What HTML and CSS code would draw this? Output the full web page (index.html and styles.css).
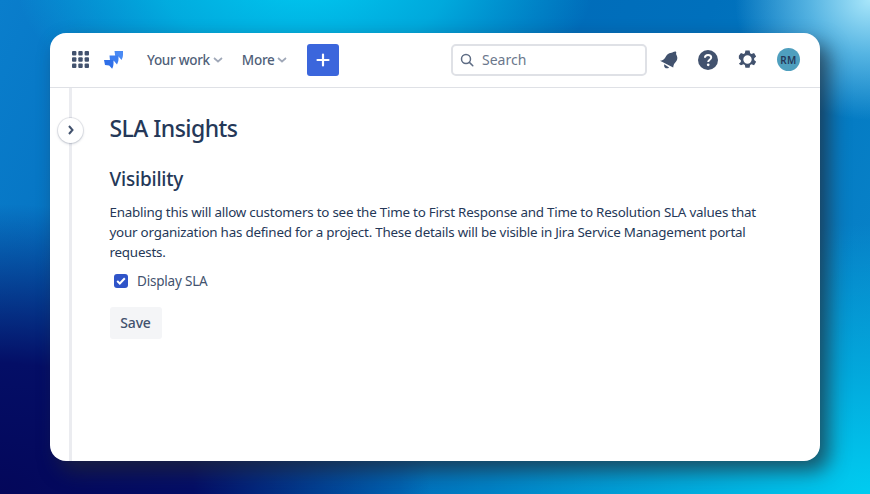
FILE: index.html
```html
<!DOCTYPE html>
<html lang="en">
<head>
<meta charset="utf-8">
<title>SLA Insights</title>
<link rel="stylesheet" href="styles.css">
</head>
<body>
<div class="window">
  <header class="topbar">
    <div class="nav-left">
      <svg class="apps" width="17" height="17" viewBox="0 0 17 17"><g fill="#42526e"><rect x="0" y="0" width="4.400" height="4.400" rx="1"/><rect x="6.300" y="0" width="4.400" height="4.400" rx="1"/><rect x="12.600" y="0" width="4.400" height="4.400" rx="1"/><rect x="0" y="6.300" width="4.400" height="4.400" rx="1"/><rect x="6.300" y="6.300" width="4.400" height="4.400" rx="1"/><rect x="12.600" y="6.300" width="4.400" height="4.400" rx="1"/><rect x="0" y="12.600" width="4.400" height="4.400" rx="1"/><rect x="6.300" y="12.600" width="4.400" height="4.400" rx="1"/><rect x="12.600" y="12.600" width="4.400" height="4.400" rx="1"/></g></svg>
      <svg class="logo" width="19" height="19" viewBox="0 0 19 19"><path fill="#4a8af4" d="M10.500 1H19v3.500c0 2.500-.8 4-1.500 5.500L14.500 6.500l-1.500-.4-1.800 0z"/><path fill="#3d7ef0" d="M5.500 5.500h9v3.500c0 2.400-.8 4-1.500 5.400L9.800 10.800 6 10.600z"/><path fill="#2f6fe8" d="M0 10h9.500v3.500c0 2.200-.7 3.800-1.400 5.300L5.200 15.400 1 15z"/></svg>
      <nav class="menu">
        <a class="menu-item">Your work<svg class="chev" width="10" height="6" viewBox="0 0 10 6"><path d="M1 1l4 3.500L9 1" fill="none" stroke="#a0a8b8" stroke-width="1.700"/></svg></a>
        <a class="menu-item">More<svg class="chev" width="10" height="6" viewBox="0 0 10 6"><path d="M1 1l4 3.500L9 1" fill="none" stroke="#a0a8b8" stroke-width="1.700"/></svg></a>
      </nav>
      <button class="create" aria-label="Create"><svg width="14" height="14" viewBox="0 0 14 14"><path d="M7 1.500v11M1.500 7h11" stroke="#fff" stroke-width="2.200" stroke-linecap="round"/></svg></button>
    </div>
    <div class="nav-right">
      <div class="search">
        <svg width="14" height="14" viewBox="0 0 14 14"><circle cx="6" cy="6" r="4.500" fill="none" stroke="#5e6c84" stroke-width="1.500"/><path d="M9.400 9.400l3.400 3.400" stroke="#5e6c84" stroke-width="1.500" stroke-linecap="round"/></svg>
        <span>Search</span>
      </div>
      <svg class="bell" width="19" height="18" viewBox="0 0 19 18"><g fill="#42526e"><path d="M0 9.800c2.700-.2 4.200-1.100 5.300-3.200C6.500 4 8.300 1.900 11.500 1.700c1.300-.1 2.200-1.100 3.600-1.200.9 0 1.400.7 1.100 1.600-.3.800 0 1.600.5 2.500 1.200 2.300.7 4.800-1 6.400-1.700 1.600-2.300 3.300-2.500 5.500z"/><path d="M4.300 13.300l4.800 3.200c-1.200 1.200-3.300 1.100-4.300-.1-.7-.8-.8-2.100-.5-3.100z"/></g></svg>
      <svg class="help" width="20" height="20" viewBox="0 0 20 20"><circle cx="10" cy="10" r="10" fill="#42526e"/><path d="M6.900 7.700c.1-1.800 1.500-2.800 3.200-2.800 1.800 0 3.100 1.100 3.100 2.600 0 2.300-3 2.300-3 4.400" fill="none" stroke="#fff" stroke-width="2"/><circle cx="10.200" cy="14.800" r="1.350" fill="#fff"/></svg>
      <svg class="gear" width="19" height="19" viewBox="0 0 20 20"><path fill="#42526e" fill-rule="evenodd" d="M7.800.5h4.400l.6 2.800 1.400.8 2.700-.9 2.200 3.700-2.100 1.900v1.600l2.100 1.900-2.200 3.700-2.700-.9-1.400.8-.6 2.800H7.800l-.6-2.800-1.400-.8-2.700.9L.9 14.400 3 12.500v-1.600L.9 9 .9 6.100 3.100 3.200l2.700.9 1.400-.8zM10 5.600a4.400 4.400 0 1 0 0 8.800 4.400 4.400 0 0 0 0-8.800z"/></svg>
      <div class="avatar">RM</div>
    </div>
  </header>
  <div class="body">
    <aside class="rail">
      <button class="expand" aria-label="Expand sidebar"><svg width="8" height="10" viewBox="0 0 8 10"><path d="M2 1l3.500 4L2 9" fill="none" stroke="#42526e" stroke-width="2"/></svg></button>
    </aside>
    <main class="content">
      <h1>SLA Insights</h1>
      <h2>Visibility</h2>
      <p>Enabling this will allow customers to see the Time to First Response and Time to Resolution SLA values that your organization has defined for a project. These details will be visible in Jira Service Management portal requests.</p>
      <label class="check">
        <span class="box"><svg width="10" height="8" viewBox="0 0 10 8"><path d="M1.200 4l2.600 2.500L8.800 1.300" fill="none" stroke="#fff" stroke-width="2"/></svg></span>
        Display SLA
      </label>
      <button class="save">Save</button>
    </main>
  </div>
</div>
</body>
</html>
```
FILE: styles.css
```css
* { box-sizing: border-box; }
html, body { height: 100%; }
body {
  margin: 0;
  height: 494px;
  overflow: hidden;
  padding: 32.700px 50px 0;
  font-family: "Noto Sans", "Open Sans", sans-serif;
  color: #253858;
  background:
    radial-gradient(135px 120px at 100% 0%, #a8e6fa 0%, rgba(120,205,240,.7) 45%, rgba(60,160,220,0) 100%),
    radial-gradient(290px 150px at 305px -20px, #00c8f0 0%, rgba(0,190,232,.75) 50%, rgba(0,170,220,0) 100%),
    radial-gradient(470px 270px at 100% 100%, #00ccf0 0%, rgba(0,180,226,.75) 45%, rgba(0,120,190,0) 100%),
    radial-gradient(430px 290px at 0% 100%, #04075a 0%, #040e66 45%, rgba(5,30,110,0) 100%),
    linear-gradient(115deg, #0a7ecc 0%, #0068b8 35%, #0070bc 65%, #0a88cc 100%);
}
.window {
  width: 770px;
  height: 428.600px;
  background: #fff;
  border-radius: 16px;
  box-shadow: 9px 10px 20px rgba(35, 40, 50, .7);
  display: flex;
  flex-direction: column;
  overflow: hidden;
}
.topbar {
  height: 55px;
  flex: none;
  border-bottom: 1px solid #dfe1e6;
  display: flex;
  align-items: center;
  justify-content: space-between;
  padding: 0 20px 0 22px;
}
.nav-left, .nav-right, .menu, .menu-item { display: flex; align-items: center; }
.logo { margin-left: 15px; }
.menu { margin-left: 24px; gap: 19px; }
.menu-item { font-size: 13.500px; letter-spacing: -.3px; font-weight: 500; color: #505f79; gap: 3px; }
.create {
  margin-left: 20px;
  width: 32px;
  height: 32px;
  border: 0;
  padding: 0;
  border-radius: 3px;
  background: #3b66dc;
  display: flex;
  align-items: center;
  justify-content: center;
}
.search {
  width: 196px;
  height: 32px;
  border: 2px solid #dfe1e6;
  border-radius: 5px;
  display: flex;
  align-items: center;
  gap: 8px;
  padding-left: 7px;
  font-size: 14px;
  color: #6b778c;
}
.bell { margin-left: 13px; }
.help { margin-left: 19px; }
.gear { margin-left: 20px; }
.avatar {
  margin-left: 20px;
  width: 23px;
  height: 23px;
  border-radius: 50%;
  background: #4f9fbe;
  color: #253858;
  font-size: 10px;
  font-weight: 600;
  letter-spacing: .3px;
  display: flex;
  align-items: center;
  justify-content: center;
}
.body { flex: 1; display: flex; min-height: 0; }
.rail {
  width: 22px;
  flex: none;
  border-right: 3px solid #ebecf0;
  position: relative;
}
.expand {
  position: absolute;
  left: 8px;
  top: 30px;
  width: 25px;
  height: 25px;
  padding: 0;
  border: 0;
  border-radius: 50%;
  background: #fff;
  box-shadow: 0 0 0 1px rgba(9,30,66,.08), 0 1px 3px rgba(9,30,66,.2);
  display: flex;
  align-items: center;
  justify-content: center;
}
.content { padding: 26px 40px 0 37.500px; flex: 1; }
h1 { margin: 0; font-size: 23px; letter-spacing: -.55px; line-height: 29px; font-weight: 500; color: #253858; }
h2 { margin: 23px 0 0; font-size: 19px; letter-spacing: -.2px; line-height: 26px; font-weight: 500; color: #253858; }
p { margin: 10px 0 0; font-size: 13.400px; letter-spacing: -.225px; line-height: 20px; color: #253858; }
.check { display: flex; align-items: center; gap: 9px; margin: 9px 0 0 4.500px; height: 20px; font-size: 13.500px; letter-spacing: -.2px; line-height: 20px; color: #42526e; }
.box {
  width: 14px;
  height: 14px;
  border-radius: 3px;
  background: #2f54c8;
  display: flex;
  align-items: center;
  justify-content: center;
}
.save {
  display: block;
  margin-top: 16px;
  width: 52px;
  height: 32px;
  border: 0;
  padding: 0;
  border-radius: 3px;
  background: #f4f5f7;
  font: 500 14px "Noto Sans", sans-serif;
  letter-spacing: -.2px;
  color: #42526e;
}
```
